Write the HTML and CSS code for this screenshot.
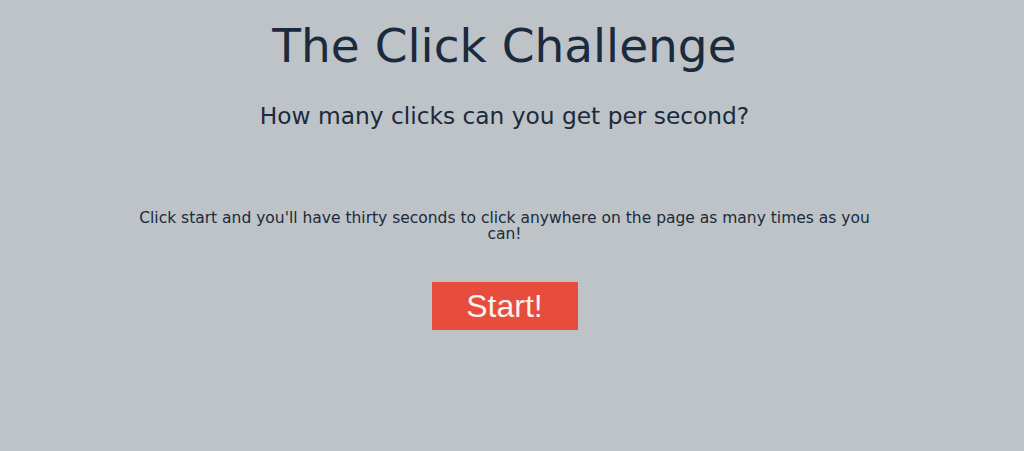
FILE: index.html
```html
<!DOCTYPE html>
<html>
<head>
<meta charset="utf-8">
<link rel="stylesheet" href="styles.css">
</head>
<body>
<main class="page">
  <h1 class="title">The Click Challenge</h1>
  <h2 class="subtitle">How many clicks can you get per second?</h2>
  <p class="intro">Click start and you'll have thirty seconds to click anywhere on the page as many times as you can!</p>
  <button class="start">Start!</button>
</main>
</body>
</html>
```

FILE: styles.css
```css
html, body {
  margin: 0;
  padding: 0;
  background: #bdc3c7;
}
body {
  padding-right: 15px;
  color: #1b2a3c;
  font-family: "DejaVu Sans", sans-serif;
}
.page {
  display: flex;
  flex-direction: column;
  align-items: center;
  text-align: center;
}
.title {
  font-size: 47px;
  font-weight: normal;
  margin: 18px 0 0;
  line-height: 56px;
}
.subtitle {
  font-size: 23.3px;
  font-weight: normal;
  margin: 28px 0 0;
  line-height: 28px;
}
.intro {
  font-size: 15.5px;
  line-height: 16px;
  width: 745px;
  margin: 80px 0 0;
}
.start {
  margin-top: 40px;
  width: 146px;
  height: 48px;
  border: none;
  background: #e74c3c;
  color: #f7f1f0;
  font-family: "Liberation Sans", Arial, sans-serif;
  font-size: 32px;
  padding: 0;
}
```
